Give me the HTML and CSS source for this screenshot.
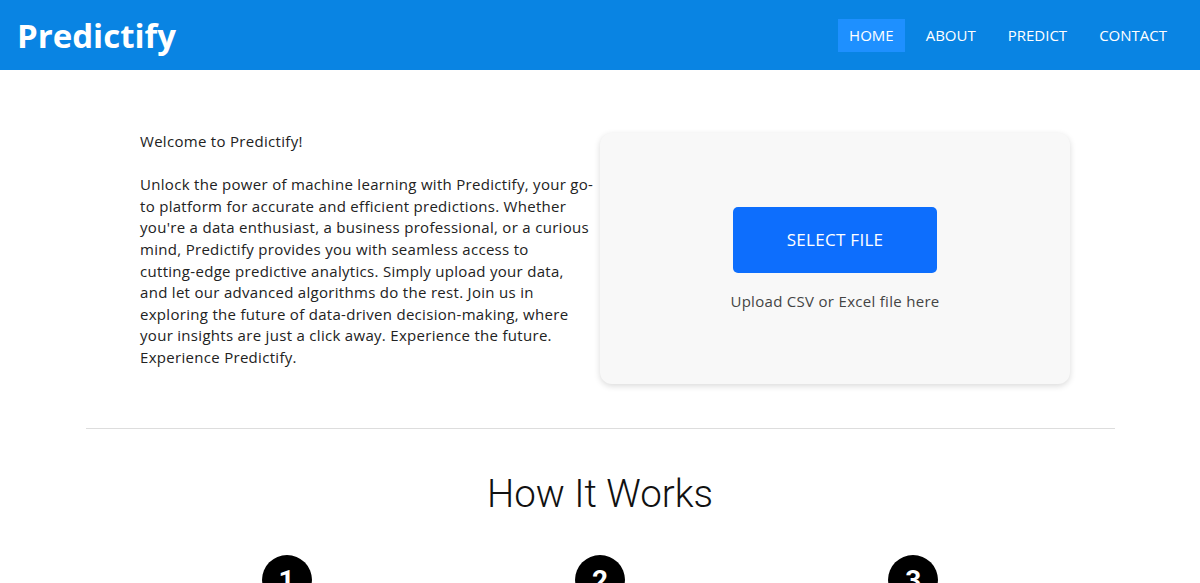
FILE: index.html
```html
<!DOCTYPE html>
<html lang="en">
<head>
    <meta charset="UTF-8">
    <meta name="viewport" content="width=device-width, initial-scale=1.0">
    <title>Predictify</title>
    <link rel="stylesheet" href="styles.css">
</head>
<body>
    <header class="topbar">
        <a class="brand" href="#">Predictify</a>
        <nav class="nav">
            <a href="#" class="active">HOME</a>
            <a href="#">ABOUT</a>
            <a href="#">PREDICT</a>
            <a href="#">CONTACT</a>
        </nav>
    </header>

    <section class="intro">
        <div class="intro-text">
            <p>Welcome to Predictify!<br><br>Unlock the power of machine learning with Predictify, your go-to platform for accurate and efficient predictions. Whether you're a data enthusiast, a business professional, or a curious mind, Predictify provides you with seamless access to<br>cutting-edge predictive analytics. Simply upload your data, and let our advanced algorithms do the rest. Join us in exploring the future of data-driven decision-making, where your insights are just a click away. Experience the future. Experience Predictify.</p>
        </div>
        <div class="upload-card">
            <button class="select-btn">SELECT FILE</button>
            <p class="upload-hint">Upload CSV or Excel file here</p>
        </div>
    </section>

    <hr class="divider">

    <section class="how">
        <h2>How It Works</h2>
        <div class="steps">
            <div class="step"><span class="step-num">1</span></div>
            <div class="step"><span class="step-num">2</span></div>
            <div class="step"><span class="step-num">3</span></div>
        </div>
    </section>
</body>
</html>
```

FILE: styles.css
```css
body {
    font-family: "Open Sans", Arial, sans-serif;
    margin: 0;
    color: #222;
    background: #fff;
}
.topbar {
    display: flex;
    justify-content: space-between;
    align-items: center;
    height: 70px;
    padding: 0 22px 0 17px;
    background-color: #0984e3;
}
.brand {
    color: #fff;
    font-size: 33px;
    font-weight: 700;
    text-decoration: none;
}
.nav {
    display: flex;
    gap: 10px;
}
.nav a {
    color: #fff;
    font-size: 15px;
    text-decoration: none;
    padding: 6px 11px 7px;
    line-height: 20px;
}
.nav a.active {
    background-color: #1e90ff;
}
.intro {
    display: flex;
    width: 940px;
    margin: 62px auto 0;
}
.intro-text {
    width: 454px;
    padding-left: 10px;
    font-size: 15px;
    letter-spacing: 0.3px;
    line-height: 21.6px;
}
.intro-text p {
    margin: -1px 0 0;
}
.upload-card {
    width: 470px;
    height: 251px;
    margin-left: auto;
    margin-top: 1px;
    background: #f8f8f8;
    border-radius: 12px;
    box-shadow: 0 2px 6px rgba(0, 0, 0, 0.15);
    display: flex;
    flex-direction: column;
    align-items: center;
    justify-content: center;
}
.select-btn {
    width: 204px;
    height: 66px;
    border: none;
    border-radius: 5px;
    background-color: #0d6efd;
    color: #fff;
    font-family: inherit;
    font-size: 17px;
    letter-spacing: 0.3px;
    cursor: pointer;
}
.upload-hint {
    margin: 18px 0 0;
    font-size: 15px;
    letter-spacing: 0.3px;
    color: #444;
}
.divider {
    width: 1029px;
    margin: 44px auto 0;
    border: none;
    border-top: 1px solid #ddd;
}
.how {
    width: 940px;
    margin: 0 auto;
}
.how h2 {
    font-family: Roboto, Arial, sans-serif;
    font-weight: 300;
    font-size: 38.5px;
    text-align: center;
    margin: 42px 0 0;
    color: #111;
}
.steps {
    display: grid;
    grid-template-columns: repeat(3, 1fr);
    margin-top: 39px;
}
.step {
    display: flex;
    justify-content: center;
}
.step-num {
    width: 50px;
    height: 50px;
    border-radius: 50%;
    background: #000;
    color: #fff;
    font-family: Roboto, Arial, sans-serif;
    font-weight: 700;
    font-size: 28px;
    display: flex;
    align-items: center;
    justify-content: center;
}
```
